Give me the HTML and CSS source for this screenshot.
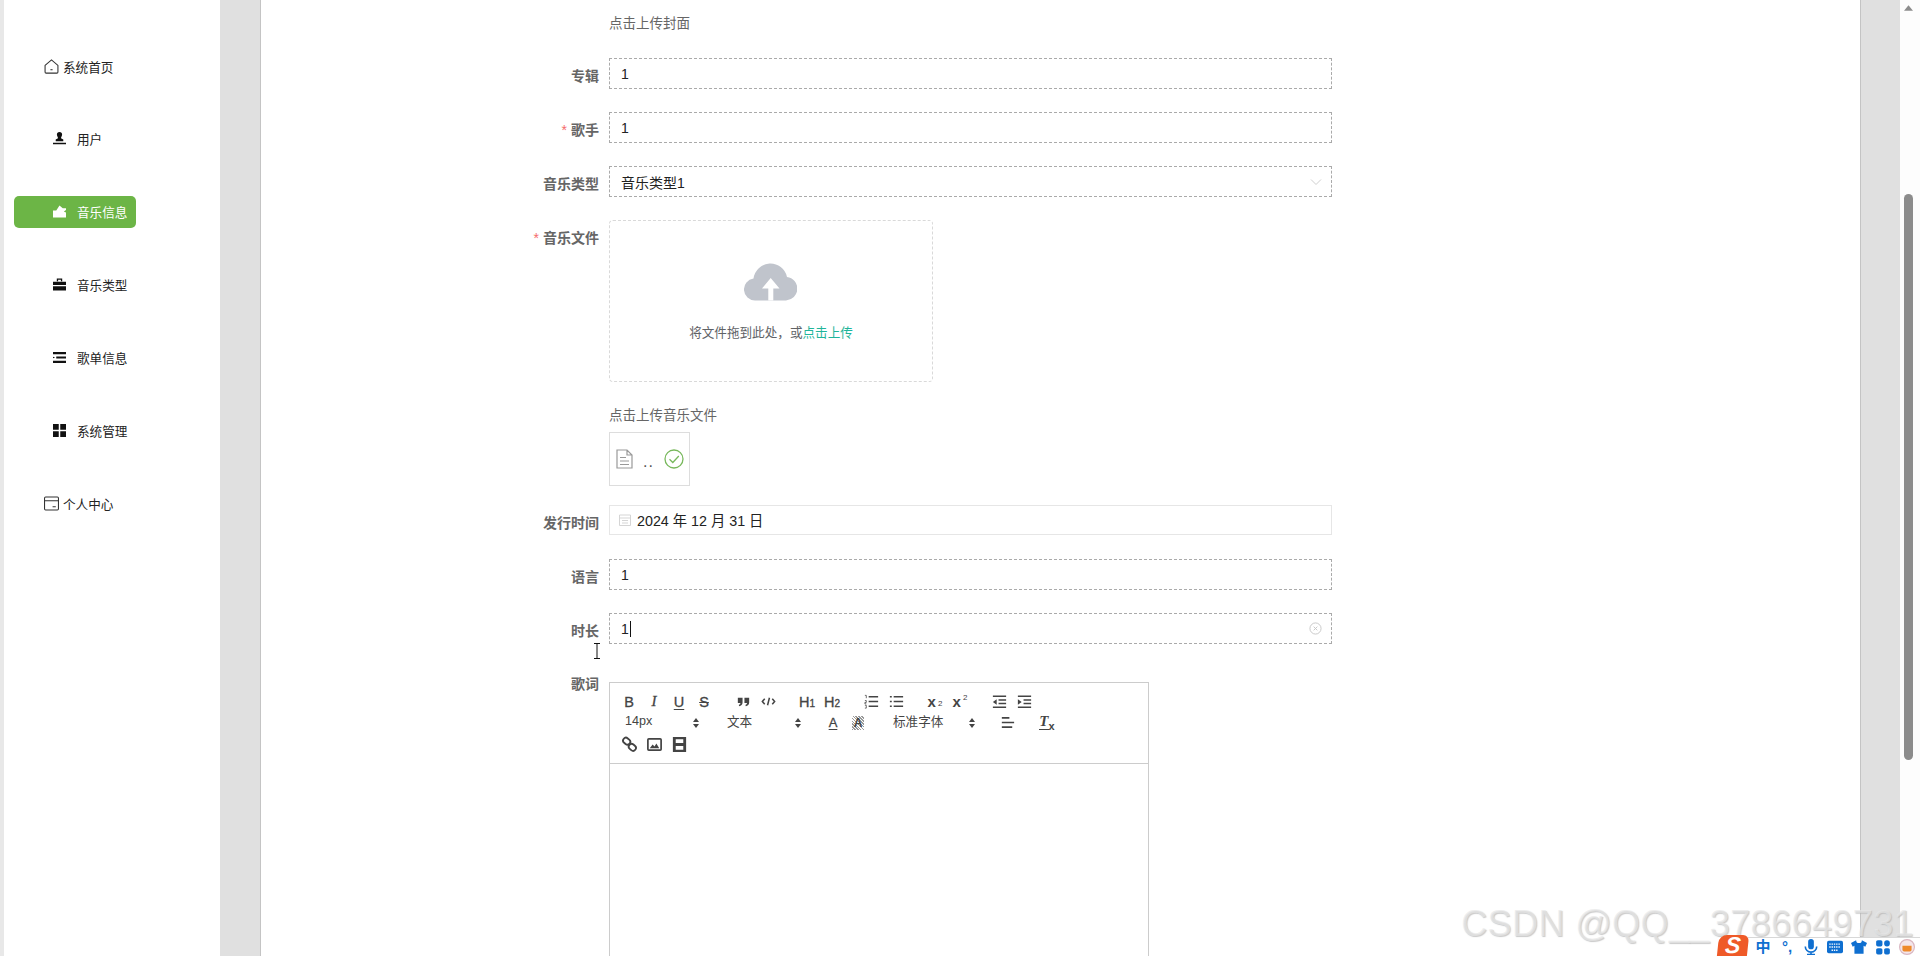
FILE: index.html
```html
<!DOCTYPE html>
<html lang="zh-CN">

<head>
    <meta charset="UTF-8">
    <title>音乐信息</title>
    <link rel="stylesheet" href="styles.css">
</head>

<body>
<div class="page">
    <div class="sidebar">
        <div class="nav-item wide">
            <svg class="nav-icon" viewBox="0 0 14 14"><path d="M1 6 7 .8 13 6v6.200a1 1 0 0 1-1 1H2a1 1 0 0 1-1-1z" fill="none" stroke="#333"/><path d="M6 10h2" stroke="#333"/></svg>
            <span>系统首页</span>
        </div>
        <div class="nav-item">
            <svg class="nav-icon" viewBox="0 0 12 12"><path d="M6 0a2.400 2.400 0 0 1 2.400 2.400c0 1.500-1 2.300-1 3.400L9.500 7v1.500h-7V7l2.100-1.200c0-1.100-1-1.900-1-3.400A2.400 2.400 0 0 1 6 0zM0 10h12v1.300H0z" fill="#111"/></svg>
            <span>用户</span>
        </div>
        <div class="nav-item active">
            <svg class="nav-icon" viewBox="0 0 12 12"><path d="M0 5h3l3-4.500 3 2.500h3v1.500l-2 1.500 2 1V11.500H0z" fill="#fff"/></svg>
            <span>音乐信息</span>
        </div>
        <div class="nav-item">
            <svg class="nav-icon" viewBox="0 0 12 12"><path d="M3.500 3V.5h5V3H7.300V1.700H4.700V3zM0 3.500h12v3H0zM0 7.500h12V11.500H0z" fill="#111"/></svg>
            <span>音乐类型</span>
        </div>
        <div class="nav-item">
            <svg class="nav-icon" viewBox="0 0 12 12"><path d="M0 1h12v2H0zM3 5h9v2H3zM0 5.200 2 6 0 6.800zM0 9h12v2H0z" fill="#111"/></svg>
            <span>歌单信息</span>
        </div>
        <div class="nav-item">
            <svg class="nav-icon" viewBox="0 0 12 12"><path d="M0 0h5.300v5.300H0zM6.700 0H12v5.300H6.700zM0 6.700h5.300V12H0zM6.700 6.700H12V12H6.700z" fill="#111"/></svg>
            <span>系统管理</span>
        </div>
        <div class="nav-item wide">
            <svg class="nav-icon" viewBox="0 0 14 14"><rect x=".5" y="1" width="13" height="12" rx="1" fill="none" stroke="#333"/><path d="M.5 4.500h13M8 10h3" stroke="#333"/></svg>
            <span>个人中心</span>
        </div>
    </div>

    <div class="gutter"></div>

    <div class="main">
        <div class="row row-first">
            <div class="label"></div>
            <div class="hint">点击上传封面</div>
        </div>

        <div class="row">
            <div class="label">专辑</div>
            <div class="field">1</div>
        </div>

        <div class="row">
            <div class="label"><span class="star">*</span>歌手</div>
            <div class="field">1</div>
        </div>

        <div class="row">
            <div class="label">音乐类型</div>
            <div class="field">
                <span class="grow">音乐类型1</span>
                <svg class="chevron" viewBox="0 0 12 8"><path d="M1 1.500 6 6.500l5-5" fill="none" stroke="#cfcfcf"/></svg>
            </div>
        </div>

        <div class="row row-upload">
            <div class="label"><span class="star">*</span>音乐文件</div>
            <div>
                <div class="upload">
                    <svg class="cloud" viewBox="0 0 53 40">
                        <path d="M11 40A11 11 0 0 1 9.500 18.100 17 17 0 0 1 43 16.500 11.800 11.800 0 0 1 42 40z" fill="#c0c4cc"/>
                        <path d="M26.700 17.500 35.500 28H29.300V40H24.300V28H18z" fill="#fff"/>
                    </svg>
                    <div class="upload-text">将文件拖到此处，或<em>点击上传</em></div>
                </div>
                <div class="hint hint-file">点击上传音乐文件</div>
                <div class="file-tile">
                    <svg class="file-icon" viewBox="0 0 17 20"><path d="M1 1h10l5 5v13H1zM11 1v5h5M4 8.500h6M4 12h9M4 15.500h9" fill="none" stroke="#999" stroke-width="1.200"/></svg>
                    <span class="dots">..</span>
                    <svg class="check-icon" viewBox="0 0 20 20"><circle cx="10" cy="10" r="9" fill="none" stroke="#78b85c" stroke-width="1.300"/><path d="M5.500 10.300 8.800 13.500 14.800 7" fill="none" stroke="#78b85c" stroke-width="1.300"/></svg>
                </div>
            </div>
        </div>

        <div class="row row-date">
            <div class="label">发行时间</div>
            <div class="field field-date">
                <svg class="cal-icon" viewBox="0 0 12 12"><path d="M.5 1h11v10.500H.5zM.5 4h11M3 6.500h6M3 9h6" fill="none" stroke="#d5d5d5"/></svg>
                <span class="date-text">2024 年 12 月 31 日</span>
            </div>
        </div>

        <div class="row">
            <div class="label">语言</div>
            <div class="field">1</div>
        </div>

        <div class="row row-time">
            <div class="label">时长</div>
            <div class="field">
                <span>1</span><span class="caret"></span>
                <span class="grow"></span>
                <svg class="clear-icon" viewBox="0 0 14 14"><circle cx="7" cy="7" r="6" fill="none" stroke="#c6c6c6"/><path d="M5 5l4 4M9 5l-4 4" stroke="#c6c6c6"/></svg>
            </div>
        </div>

        <div class="row">
            <div class="label label-editor">歌词</div>
            <div class="editor">
                <div class="toolbar">
                    <div class="tool-row">
                        <span class="btn txt">B</span>
                        <span class="btn txt italic">I</span>
                        <span class="btn txt under">U</span>
                        <span class="btn txt strike group-end">S</span>
                        <span class="btn"><svg viewBox="0 0 18 18"><path d="M3 5h5v5c0 2.500-1.500 3.500-3.500 4l-.5-1.300c1-.4 1.700-1 1.700-2H3zM10 5h5v5c0 2.500-1.500 3.500-3.500 4l-.5-1.300c1-.4 1.700-1 1.700-2H10z" fill="#444"/></svg></span>
                        <span class="btn group-end"><svg viewBox="0 0 18 18"><path d="M5 6 2.500 9 5 12M13 6l2.500 3L13 12M10 5 8 13" fill="none" stroke="#444" stroke-width="1.600"/></svg></span>
                        <span class="btn txt">H<sub>1</sub></span>
                        <span class="btn txt group-end">H<sub>2</sub></span>
                        <span class="btn"><svg viewBox="0 0 18 18"><path d="M6 4h10M6 9h10M6 14h10" stroke="#444" stroke-width="1.600"/><path d="M2 2.500h1.500v3M2 8h1.500v2H2v1.500h1.500M2 13h1.500v3H2" fill="none" stroke="#444" stroke-width=".8"/></svg></span>
                        <span class="btn group-end"><svg viewBox="0 0 18 18"><path d="M6 4h10M6 9h10M6 14h10" stroke="#444" stroke-width="1.600"/><path d="M2 4h2M2 9h2M2 14h2" stroke="#444" stroke-width="1.600"/></svg></span>
                        <span class="btn txt script">x<sub class="tiny">2</sub></span>
                        <span class="btn txt script group-end">x<sup class="tiny">2</sup></span>
                        <span class="btn"><svg viewBox="0 0 18 18"><path d="M2 3.500h14M8 7.500h8M8 11h8M2 15h14" stroke="#444" stroke-width="1.600"/><path d="M6 6.500v6L2 9.500z" fill="#444"/></svg></span>
                        <span class="btn"><svg viewBox="0 0 18 18"><path d="M2 3.500h14M8 7.500h8M8 11h8M2 15h14" stroke="#444" stroke-width="1.600"/><path d="M2 6.500v6l4-3z" fill="#444"/></svg></span>
                    </div>
                    <div class="tool-row">
                        <span class="pick pick-size"><span class="pick-text">14px</span><svg class="updown" viewBox="0 0 8 12"><path d="M4 1 7 5H1zM4 11 1 7h6z" fill="#444"/></svg></span>
                        <span class="pick pick-size"><span class="pick-text">文本</span><svg class="updown" viewBox="0 0 8 12"><path d="M4 1 7 5H1zM4 11 1 7h6z" fill="#444"/></svg></span>
                        <span class="btn txt color-a">A</span>
                        <span class="btn"><span class="bg-a">A</span></span>
                        <span class="pick pick-font"><span class="pick-text">标准字体</span><svg class="updown" viewBox="0 0 8 12"><path d="M4 1 7 5H1zM4 11 1 7h6z" fill="#444"/></svg></span>
                        <span class="btn"><svg viewBox="0 0 18 18"><path d="M3 4h8M3 9h13M3 14h11" stroke="#444" stroke-width="1.800"/></svg></span>
                        <span class="btn clean"><span class="clean-t">T</span><sub>x</sub></span>
                    </div>
                    <div class="tool-row">
                        <span class="btn"><svg viewBox="0 0 18 18"><g fill="none" stroke="#444" stroke-width="2"><rect x="2" y="2.500" width="8" height="6" rx="3" transform="rotate(40 6 5.500)"/><rect x="8" y="9" width="8" height="6" rx="3" transform="rotate(40 12 12)"/></g></svg></span>
                        <span class="btn"><svg viewBox="0 0 18 18"><rect x="2" y="3" width="14" height="12" rx="1" fill="none" stroke="#444" stroke-width="1.800"/><path d="M4 13l3-4 2 2 2-3 3 5z" fill="#444"/></svg></span>
                        <span class="btn"><svg viewBox="0 0 18 18"><path fill-rule="evenodd" d="M2 1h14v16H2zM5 3.500v4h8v-4zM5 10.500v4h8v-4z" fill="#444"/></svg></span>
                    </div>
                </div>
                <div class="editor-body"></div>
            </div>
        </div>
    </div>

    <div class="gutter gutter-right"></div>

    <div class="scrollbar">
        <svg class="scroll-up" viewBox="0 0 10 6"><path d="M5 0 10 6H0z" fill="#8c8c8c"/></svg>
        <div class="thumb"></div>
    </div>
</div>

<svg class="ibeam" viewBox="0 0 8 16"><path d="M1 .5h6M4 .5v15M1 15.500h6" fill="none" stroke="#111"/></svg>

<div class="watermark">CSDN @QQ__3786649731</div>

<div class="ime">
    <div class="ime-logo">S</div>
    <div class="ime-bar">
        <span class="ime-item ime-zh">中</span>
        <span class="ime-item">°,</span>
        <span class="ime-item"><svg viewBox="0 0 14 14"><rect x="4.500" y="0" width="5" height="9" rx="2.500" fill="#0f6fd0"/><path d="M2 6.500a5 5 0 0 0 10 0M7 11.500V14M3.500 13.500h7" fill="none" stroke="#0f6fd0" stroke-width="1.400"/></svg></span>
        <span class="ime-item"><svg viewBox="0 0 14 14"><rect x="0" y="1.500" width="14" height="11" rx="1.500" fill="#0f6fd0"/><path d="M2 4.500h10M2 7h10M4 9.800h6" stroke="#fff" stroke-width="1.200" stroke-dasharray="1.200 .8"/></svg></span>
        <span class="ime-item"><svg viewBox="0 0 14 14"><path d="M4.500 1 0 3.500l1.500 3.200L3 6v7h8V6l1.500.7L14 3.500 9.500 1a2.500 2.500 0 0 1-5 0z" fill="#0f6fd0"/></svg></span>
        <span class="ime-item"><svg viewBox="0 0 14 14"><rect x="1" y="1" width="5.500" height="5.500" rx="1.500" fill="#0f6fd0"/><rect x="8" y="1" width="5" height="5.500" rx="2.500" fill="#0f6fd0"/><rect x="1" y="8" width="5.500" height="5.500" rx="1.500" fill="#0f6fd0"/><rect x="8" y="8" width="5" height="5.500" rx="1.500" fill="#0f6fd0"/></svg></span>
        <span class="ime-item"><svg viewBox="0 0 14 14"><circle cx="7" cy="7" r="6.500" fill="#f4e6ea" stroke="#d9b6c0"/><path d="M3 6h8v3.500a1.500 1.500 0 0 1-1.500 1.500h-5A1.500 1.500 0 0 1 3 9.500z" fill="#ee8a2b"/></svg></span>
    </div>
</div>
</body>
</html>
```

FILE: styles.css
```css
* {
    margin: 0;
    padding: 0;
    box-sizing: border-box;
}

html, body {
    height: 100%;
    overflow: hidden;
}

body {
    position: relative;
    font-family: "Liberation Sans", "Noto Sans CJK SC", sans-serif;
    font-size: 14px;
    color: #222;
    background-color: #fff;
}

.page {
    display: flex;
    height: 956px;
}

/* left menu */
.sidebar {
    width: 220px;
    flex-shrink: 0;
    border-left: 4px solid #e8e8e8;
    padding: 50px 0 0 10px;
    display: flex;
    flex-direction: column;
    gap: 40.9px;
    background-color: #fff;
}

.nav-item {
    width: 122px;
    height: 32px;
    padding-left: 39px;
    display: flex;
    align-items: center;
    gap: 11px;
    border-radius: 5px;
    font-size: 12.6px;
    color: #222;
}

.nav-item .nav-icon {
    width: 13px;
    height: 13px;
    flex-shrink: 0;
}

.nav-item.wide {
    padding-left: 30px;
    gap: 4px;
}

.nav-item.wide .nav-icon {
    width: 15px;
    height: 15px;
}

.nav-item.active {
    background-color: #6cb546;
    color: #fff;
}

.gutter {
    width: 40px;
    flex-shrink: 0;
    background-color: #e0e0e0;
}

.gutter-right {
    border-left: 1px solid #c4c4c4;
}

/* form */
.main {
    flex: 1;
    border-left: 1px solid #c4c4c4;
    background-color: #fff;
    overflow: hidden;
}

.row {
    display: flex;
    margin-bottom: 23px;
}

.row-first {
    padding-top: 15px;
    margin-bottom: 25px;
}

.row-upload {
    margin-bottom: 19px;
}

.row-date {
    margin-bottom: 24px;
}

.row-time {
    margin-bottom: 38px;
}

.label {
    width: 348px;
    height: 30px;
    flex-shrink: 0;
    padding: 2.5px 10px 0 0;
    line-height: 30px;
    text-align: right;
    font-size: 14px;
    font-weight: 700;
    color: #666;
}

.label-editor {
    margin-top: -16px;
}

.row-first .label {
    height: 18px;
    padding: 0;
}

.star {
    margin-right: 4px;
    font-weight: 400;
    color: #f56c6c;
}

.hint {
    height: 18px;
    line-height: 18px;
    font-size: 13.5px;
    color: #666;
}

.field {
    width: 723px;
    height: 31px;
    padding: 0 9px 0 11px;
    display: flex;
    align-items: center;
    border: 1px dashed #aaa;
    font-size: 14px;
    color: #222;
}

.field-date {
    height: 30px;
    padding-left: 9px;
    gap: 6px;
    font-size: 14.3px;
    border: 1px solid #e6e6e6;
}

.date-text {
    padding-bottom: 2px;
}

.grow {
    flex: 1;
}

.chevron {
    width: 12px;
    height: 8px;
}

.cal-icon {
    width: 12px;
    height: 12px;
}

.clear-icon {
    width: 13px;
    height: 13px;
}

.caret {
    width: 1px;
    height: 16px;
    margin-left: 1px;
    background-color: #111;
}

/* upload box */
.upload {
    width: 324px;
    height: 162px;
    padding-top: 39px;
    display: flex;
    flex-direction: column;
    align-items: center;
    border: 1px dashed #d9d9d9;
    border-radius: 4px;
}

.cloud {
    width: 53px;
    height: 41px;
    margin-right: 2px;
}

.upload-text {
    margin-top: 21px;
    font-size: 12.6px;
    color: #606266;
}

.upload-text em {
    font-style: normal;
    color: #1fb59a;
}

.hint-file {
    margin-top: 25px;
}

.file-tile {
    width: 81px;
    height: 54px;
    margin-top: 7px;
    padding-left: 6px;
    display: flex;
    align-items: center;
    border: 1px solid #ddd;
}

.file-icon {
    width: 17px;
    height: 20px;
}

.dots {
    width: 13px;
    margin: 6px 8px 0 10px;
    font-size: 16px;
    letter-spacing: 1px;
    color: #555;
}

.check-icon {
    width: 20px;
    height: 20px;
}

/* rich text editor */
.editor {
    width: 540px;
    height: 500px;
    border: 1px solid #ccc;
}

.toolbar {
    padding: 8px 0 8px 6.5px;
    border-bottom: 1px solid #ccc;
}

.tool-row {
    height: 21px;
    display: flex;
    align-items: center;
}

.tool-row:last-child {
    height: 22px;
}

.btn {
    width: 25px;
    height: 21px;
    flex-shrink: 0;
    display: flex;
    align-items: center;
    justify-content: center;
    color: #444;
}

.btn svg {
    width: 17px;
    height: 17px;
}

.group-end {
    margin-right: 14px;
}

.txt {
    font-size: 14.5px;
    -webkit-text-stroke: .3px #444;
}

.txt sub {
    margin-top: 5px;
    font-size: 10px;
    line-height: 1;
}

.txt sup {
    margin-bottom: 7px;
    font-size: 10px;
    line-height: 1;
}

.script {
    font-size: 15px;
    font-weight: 700;
    -webkit-text-stroke: 0;
}

.script .tiny {
    font-size: 8px;
    font-weight: 400;
    margin-left: 2px;
}

.italic {
    font-family: "Liberation Serif", serif;
    font-style: italic;
    font-size: 15px;
}

.under {
    text-decoration: underline;
    text-underline-offset: 2px;
}

.strike {
    text-decoration: line-through;
}

.clean {
    margin-left: 15px;
    align-items: flex-start;
    padding-top: 2px;
}

.clean-t {
    font-family: "Liberation Serif", serif;
    font-style: italic;
    font-size: 15px;
    font-weight: 700;
    line-height: 15px;
    border-bottom: 1px solid #444;
}

.clean sub {
    margin-top: 7px;
    font-size: 11px;
    font-weight: 700;
    line-height: 1;
}

.color-a {
    font-size: 13px;
    text-decoration: underline;
    text-underline-offset: 2px;
}

.bg-a {
    padding: 0 2px;
    font-size: 12px;
    font-weight: 700;
    background: repeating-linear-gradient(45deg, #999, #999 1px, #fff 1px, #fff 2px);
}

.pick {
    height: 21px;
    padding: 0 .5px 0 8.5px;
    flex-shrink: 0;
    display: flex;
    align-items: center;
    justify-content: space-between;
    font-size: 12.6px;
    color: #444;
}

.pick-text {
    padding-bottom: 4px;
}

.pick-size {
    width: 84px;
    margin-right: 18px;
}

.pick-font {
    width: 92px;
    margin-left: 14px;
    margin-right: 18px;
}

.updown {
    width: 8px;
    height: 12px;
}

/* scrollbar */
.scrollbar {
    width: 20px;
    flex-shrink: 0;
    padding: 5px 0 0 4px;
    background-color: #fdfdfd;
}

.scroll-up {
    display: block;
    width: 9px;
    height: 6px;
}

.thumb {
    width: 9px;
    height: 566px;
    margin-top: 183px;
    border-radius: 5px;
    background-color: #8c8c8c;
}

/* things lying over the page */
.ibeam {
    position: absolute;
    left: 593px;
    top: 643px;
    width: 8px;
    height: 16px;
}

.watermark {
    position: absolute;
    right: 6px;
    bottom: 11px;
    font-size: 36px;
    letter-spacing: .4px;
    white-space: nowrap;
    color: rgba(232, 232, 232, .7);
    text-shadow: 1px 1px 1px rgba(180, 180, 180, .7);
}

.ime {
    position: absolute;
    right: 0;
    bottom: 0;
    width: 202px;
    height: 21px;
    display: flex;
    align-items: flex-end;
}

.ime-logo {
    width: 30px;
    height: 21px;
    border-radius: 8px 6px 0 0;
    background-color: #ef5a28;
    color: #fff;
    font-size: 23px;
    font-weight: 700;
    font-style: italic;
    line-height: 21px;
    text-align: center;
    transform: skewX(-6deg);
}

.ime-bar {
    flex: 1;
    height: 19px;
    padding-left: 3px;
    display: flex;
    align-items: center;
    border-top: 1px solid #d8d8d8;
    background-color: #fff;
}

.ime-item {
    width: 24px;
    display: flex;
    justify-content: center;
    color: #0f6fd0;
    font-size: 15px;
    font-weight: 700;
    line-height: 16px;
}

.ime-item svg {
    width: 16px;
    height: 16px;
}
```
